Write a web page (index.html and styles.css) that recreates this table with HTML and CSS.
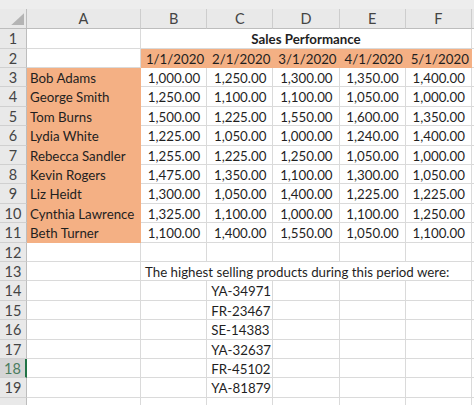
FILE: index.html
```html
<!DOCTYPE html>
<html>
<head>
<meta charset="utf-8">
<link rel="stylesheet" href="styles.css">
</head>
<body>
<div class="strip"></div>
<div class="sheet">
  <div class="corner"><span class="tri"></span></div>
  <div class="ch">A</div><div class="ch">B</div><div class="ch">C</div><div class="ch">D</div><div class="ch">E</div><div class="ch">F</div><div class="ch"></div>

  <div class="rh">1</div><div class="c"></div><div class="c title">Sales Performance</div><div class="c"></div>

  <div class="rh">2</div><div class="c"></div>
  <div class="c o date">1/1/2020</div><div class="c o date">2/1/2020</div><div class="c o date">3/1/2020</div><div class="c o date">4/1/2020</div><div class="c o date">5/1/2020</div><div class="c"></div>

  <div class="rh">3</div><div class="c o name">Bob Adams</div>
  <div class="c num">1,000.00</div><div class="c num">1,250.00</div><div class="c num">1,300.00</div><div class="c num">1,350.00</div><div class="c num">1,400.00</div><div class="c"></div>

  <div class="rh">4</div><div class="c o name">George Smith</div>
  <div class="c num">1,250.00</div><div class="c num">1,100.00</div><div class="c num">1,100.00</div><div class="c num">1,050.00</div><div class="c num">1,000.00</div><div class="c"></div>

  <div class="rh">5</div><div class="c o name">Tom Burns</div>
  <div class="c num">1,500.00</div><div class="c num">1,225.00</div><div class="c num">1,550.00</div><div class="c num">1,600.00</div><div class="c num">1,350.00</div><div class="c"></div>

  <div class="rh">6</div><div class="c o name">Lydia White</div>
  <div class="c num">1,225.00</div><div class="c num">1,050.00</div><div class="c num">1,000.00</div><div class="c num">1,240.00</div><div class="c num">1,400.00</div><div class="c"></div>

  <div class="rh">7</div><div class="c o name">Rebecca Sandler</div>
  <div class="c num">1,255.00</div><div class="c num">1,225.00</div><div class="c num">1,250.00</div><div class="c num">1,050.00</div><div class="c num">1,000.00</div><div class="c"></div>

  <div class="rh">8</div><div class="c o name">Kevin Rogers</div>
  <div class="c num">1,475.00</div><div class="c num">1,350.00</div><div class="c num">1,100.00</div><div class="c num">1,300.00</div><div class="c num">1,050.00</div><div class="c"></div>

  <div class="rh">9</div><div class="c o name">Liz Heidt</div>
  <div class="c num">1,300.00</div><div class="c num">1,050.00</div><div class="c num">1,400.00</div><div class="c num">1,225.00</div><div class="c num">1,225.00</div><div class="c"></div>

  <div class="rh">10</div><div class="c o name">Cynthia Lawrence</div>
  <div class="c num">1,325.00</div><div class="c num">1,100.00</div><div class="c num">1,000.00</div><div class="c num">1,100.00</div><div class="c num">1,250.00</div><div class="c"></div>

  <div class="rh">11</div><div class="c o name">Beth Turner</div>
  <div class="c num">1,100.00</div><div class="c num">1,400.00</div><div class="c num">1,550.00</div><div class="c num">1,050.00</div><div class="c num">1,100.00</div><div class="c"></div>

  <div class="rh">12</div><div class="c"></div><div class="c"></div><div class="c"></div><div class="c"></div><div class="c"></div><div class="c"></div><div class="c"></div>

  <div class="rh">13</div><div class="c"></div><div class="c note">The highest selling products during this period were:</div><div class="c"></div>

  <div class="rh">14</div><div class="c"></div><div class="c"></div><div class="c code">YA-34971</div><div class="c"></div><div class="c"></div><div class="c"></div><div class="c"></div>
  <div class="rh">15</div><div class="c"></div><div class="c"></div><div class="c code">FR-23467</div><div class="c"></div><div class="c"></div><div class="c"></div><div class="c"></div>
  <div class="rh">16</div><div class="c"></div><div class="c"></div><div class="c code">SE-14383</div><div class="c"></div><div class="c"></div><div class="c"></div><div class="c"></div>
  <div class="rh">17</div><div class="c"></div><div class="c"></div><div class="c code">YA-32637</div><div class="c"></div><div class="c"></div><div class="c"></div><div class="c"></div>
  <div class="rh sel">18</div><div class="c"></div><div class="c"></div><div class="c code">FR-45102</div><div class="c"></div><div class="c"></div><div class="c"></div><div class="c"></div>
  <div class="rh">19</div><div class="c"></div><div class="c"></div><div class="c code">YA-81879</div><div class="c"></div><div class="c"></div><div class="c"></div><div class="c"></div>
  <div class="rh"></div><div class="c"></div><div class="c"></div><div class="c"></div><div class="c"></div><div class="c"></div><div class="c"></div><div class="c"></div>
</div>
</body>
</html>
```
FILE: styles.css
```css
html, body {
  margin: 0;
  padding: 0;
  background: #ffffff;
  overflow: hidden;
}
body {
  width: 474px;
  height: 405px;
  font-family: Lato, "Open Sans", sans-serif;
  font-size: 13.3px;
  color: #1f1f1f;
}
.strip {
  height: 9px;
  background: #ededed;
}
.sheet {
  display: grid;
  grid-template-columns: 27px 114px repeat(5, 66.2px) 1fr;
  grid-template-rows: 20.3px;
  grid-auto-rows: 19.4px;
}
.sheet > div {
  box-sizing: border-box;
  white-space: nowrap;
  overflow: hidden;
  line-height: 18px;
}
.corner {
  background: #e9e9e9;
  border-right: 1px solid #bdbdbd;
  border-bottom: 1px solid #bdbdbd;
  display: flex;
  justify-content: flex-end;
  align-items: flex-end;
  padding: 0 2px 3px 0;
}
.tri {
  width: 13px;
  height: 12px;
  background: #b4b4b4;
  clip-path: polygon(100% 0, 100% 100%, 0 100%);
}
.ch {
  background: #e9e9e9;
  border-right: 1px solid #cdcdcd;
  border-bottom: 1px solid #bdbdbd;
  text-align: center;
  color: #444444;
  font-size: 14.5px;
  line-height: 20px !important;
}
.rh {
  background: #e9e9e9;
  border-right: 1px solid #bdbdbd;
  border-bottom: 1px solid #d0d0d0;
  text-align: center;
  color: #444444;
  font-size: 14.5px;
  padding-top: 1px;
}
.rh.sel {
  background: #d5d5d5;
  color: #4a7c5e;
  border-right: 2px solid #217346;
}
.c {
  border-right: 1px solid #dadada;
  border-bottom: 1px solid #dadada;
  padding: 1px 3px 0 3px;
}
.o {
  background: #f4b084;
  border-color: #f4b084;
}
.name {
  padding-left: 3px;
}
.num {
  text-align: right;
  padding-right: 6px;
}
.date {
  text-align: right;
  padding-right: 2px;
}
.title {
  grid-column: span 5;
  text-align: center;
  font-weight: 700;
}
.note {
  grid-column: span 5;
  padding-left: 4px;
}
.code {
  padding-left: 4px;
}
```
